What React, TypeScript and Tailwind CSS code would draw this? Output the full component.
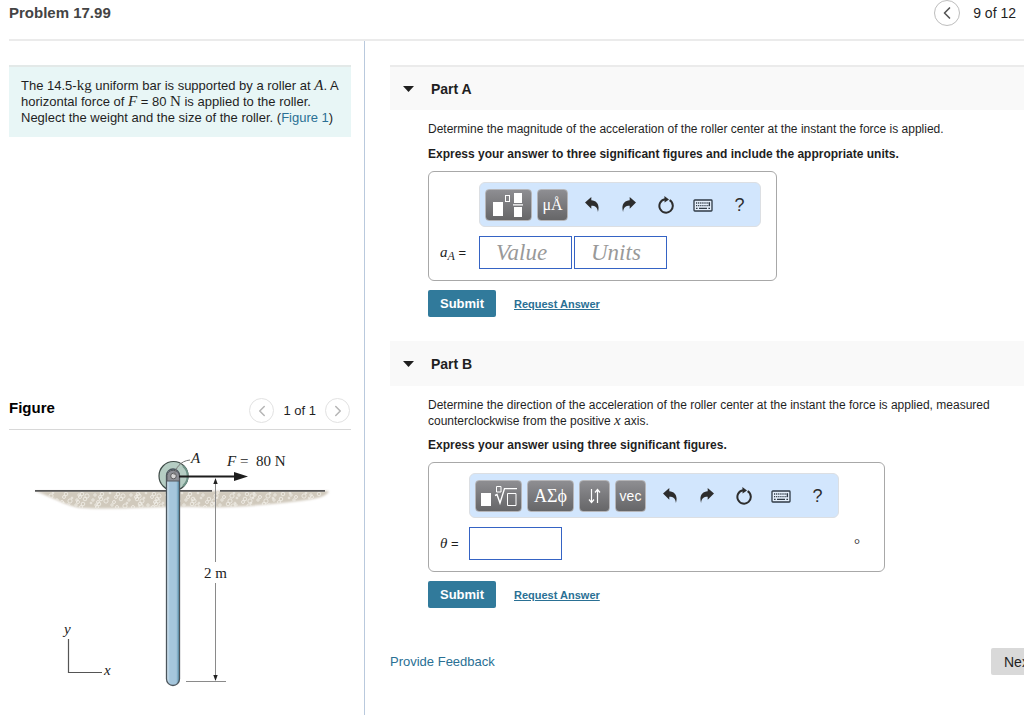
import type { ReactNode } from "react";
import { ChevronLeft, ChevronRight } from "lucide-react";

const serif = "font-['Liberation_Serif',serif]";

function Var({ children }: { children: ReactNode }) {
  return <i className="font-['Liberation_Serif',serif] text-[15px] leading-none">{children}</i>;
}

function UndoIcon({ flip = false }: { flip?: boolean }) {
  return (
    <svg width="14" height="15" viewBox="0 0 40 43" className={flip ? "-scale-x-100" : ""} aria-hidden="true">
      <path fill="#2d2d2d" d="M0 16 L18 0 V9 C34 10 43 22 37 43 C36 30 30 25 18 25 V34 Z" />
    </svg>
  );
}

function ResetIcon() {
  return (
    <svg width="18" height="18" viewBox="0 0 18 18" aria-hidden="true">
      <path d="M12.6 4.2 A6.7 6.7 0 1 1 8 3.3" fill="none" stroke="#2d2d2d" strokeWidth="2" />
      <path d="M7.4 0 L12 3.4 L7.6 6.6 Z" fill="#2d2d2d" />
    </svg>
  );
}

function KeyboardIcon() {
  return (
    <svg width="20" height="14" viewBox="0 0 20 14" aria-hidden="true">
      <rect x="1" y="2" width="18" height="11" rx="0.8" fill="#e4effb" stroke="#2f3a45" strokeWidth="1.3" />
      <path d="M3 5 H17 M3 7.6 H17" stroke="#2f3a45" strokeWidth="1.3" strokeDasharray="1.2 0.9" />
      <path d="M3 10.4 H4.6 M6 10.4 H14 M15.4 10.4 H17 M16.4 4.4 V8" stroke="#2f3a45" strokeWidth="1.3" />
    </svg>
  );
}

function FractionIcon() {
  return (
    <svg width="32" height="26" viewBox="0 0 32 26" aria-hidden="true">
      <path fill="#fff" d="M0 10 H10 V24 H0 Z M21 1 H29 V11 H21 Z M20 12.3 H30 V13.6 H20 Z M21 15 H29 V25 H21 Z" />
      <rect x="12.5" y="3.5" width="4" height="6" fill="none" stroke="#fff" />
    </svg>
  );
}

function RootIcon() {
  return (
    <svg width="36" height="24" viewBox="0 0 36 24" aria-hidden="true">
      <path fill="#fff" d="M0 9 H10 V22 H0 Z" />
      <path fill="none" stroke="#fff" d="M15.5 2.5 H20 V8 H15.5 Z M26.5 9.5 H35 V21.5 H26.5 Z" />
      <path fill="none" stroke="#fff" strokeWidth="1.4" d="M14 11.5 L16 10.5 L19 19 L23.5 4.6 H36" />
    </svg>
  );
}

function SwapIcon() {
  return (
    <svg width="13" height="16" viewBox="0 0 13 16" aria-hidden="true">
      <path fill="none" stroke="#fff" strokeWidth="1.2" d="M3.5 1 V14.5 M1 11.5 L3.5 14.5 L6 11.5 M9.5 15 V1.5 M7 4.5 L9.5 1.5 L12 4.5" />
    </svg>
  );
}

const actions = [
  { label: "Undo", icon: <UndoIcon /> },
  { label: "Redo", icon: <UndoIcon flip /> },
  { label: "Reset", icon: <ResetIcon /> },
  { label: "Keyboard shortcuts", icon: <KeyboardIcon /> },
  { label: "Help", icon: <span className="text-lg">?</span> },
];

function ToolKey({ label, wide = false, children }: { label: string; wide?: boolean; children: ReactNode }) {
  return (
    <button
      type="button"
      aria-label={label}
      className={`flex h-8 items-center justify-center rounded border border-[#b5b5b8] bg-linear-to-b from-[#8e8e92] to-[#666668] text-white ${wide ? "w-[47px]" : "w-[31px]"}`}
    >
      {children}
    </button>
  );
}

function Toolbar({ children }: { children: ReactNode }) {
  return (
    <div role="toolbar" className="flex h-[45px] w-fit items-center rounded-md border border-[#dcdfe3] bg-[#d2e6fd] pr-0.5 pl-[5px]">
      <div className="mr-[5px] flex gap-[5px]">{children}</div>
      {actions.map((action) => (
        <button key={action.label} type="button" aria-label={action.label} className="flex h-8 w-[37px] items-center justify-center text-[#2d2d2d]">
          {action.icon}
        </button>
      ))}
    </div>
  );
}

function Part({ title, first = false, children }: { title: string; first?: boolean; children: ReactNode }) {
  return (
    <section>
      <h2 className={`h-[45px] bg-[#f9f9f9] ${first ? "border-t-2 border-[#ebebeb]" : ""}`}>
        <button type="button" aria-expanded="true" className="flex h-full w-full items-center gap-[17px] pl-[13px] text-sm font-bold text-[#1f1f1f]">
          <svg width="11" height="6" viewBox="0 0 11 6" aria-hidden="true">
            <path d="M0 0 H11 L5.5 6 Z" fill="#1f1f1f" />
          </svg>
          {title}
        </button>
      </h2>
      <div className="pt-[11px] pl-[38px] text-xs leading-4">{children}</div>
    </section>
  );
}

function SubmitRow() {
  return (
    <div className="mt-[9px] flex items-center gap-[18px]">
      <button type="submit" className="h-[27px] w-[68px] rounded-xs bg-[#317a9b] text-[13px] font-bold text-white">
        Submit
      </button>
      <a href="#answer" className="text-[11px] font-bold text-[#2a7094] underline">
        Request Answer
      </a>
    </div>
  );
}

const pebbles = Array.from({ length: 170 }, (_, i) => ({
  x: 28 + ((i * 113 + (i % 7) * 3) % 289),
  y: 63 + ((i * 11 + (i % 5) * 3) % 15),
  r: 0.9 + ((i * 7) % 5) * 0.3,
}));

function BarFigure() {
  return (
    <svg viewBox="0 0 342 270" className="w-full" role="img" aria-label="Uniform bar hanging from roller A with a horizontal force of 80 N">
      <defs>
        <clipPath id="soil">
          <path d="M26 61 H320 C318 67 306 69 290 71 C250 76 215 78 190 77 C150 76 110 80 74 78 C60 77 52 71 26 61 Z" />
        </clipPath>
        <linearGradient id="steel" x1="0" x2="1">
          <stop offset="0" stopColor="#dcebf4" />
          <stop offset="0.25" stopColor="#a5c6dc" />
          <stop offset="0.75" stopColor="#a5c6dc" />
          <stop offset="1" stopColor="#4e89a6" />
        </linearGradient>
        <filter id="soft" x="-5%" y="-20%" width="110%" height="150%">
          <feGaussianBlur stdDeviation="1" />
        </filter>
      </defs>
      <g filter="url(#soft)">
        <path d="M26 61 H320 C318 67 306 69 290 71 C250 76 215 78 190 77 C150 76 110 80 74 78 C60 77 52 71 26 61 Z" fill="#d0c9bc" />
      </g>
      <g clipPath="url(#soil)" fill="none" stroke="#f3f0ea" strokeWidth="0.8">
        {pebbles.map((p, i) => (
          <circle key={i} cx={p.x} cy={p.y} r={p.r} />
        ))}
      </g>
      <path d="M26 60.8 H203 M211 60.8 H316" stroke="#555" strokeWidth="1.8" />
      <circle cx="164.5" cy="46" r="14.5" fill="#b5cdc3" stroke="#3e4a46" strokeWidth="1.2" />
      <path d="M174 36 A13 13 0 0 1 174 56" fill="none" stroke="#6f9488" strokeWidth="2" />
      <rect x="157.5" y="39" width="13" height="216.5" rx="6.5" fill="url(#steel)" stroke="#4b555c" strokeWidth="1.3" />
      <path d="M158 51 V45.5 A6.3 6.3 0 0 1 170.4 45.5 V51 Z" fill="#8d8f95" stroke="#55585c" />
      <circle cx="164.5" cy="46" r="2.8" fill="#d8d8d8" stroke="#5c5c5c" />
      <path d="M165 45 C167 38 171 31 181 30" fill="none" stroke="#777" />
      <path d="M170 46.5 H226" stroke="#1d1d1d" strokeWidth="2" />
      <path d="M225 42 L239 46.5 L225 51 Z" fill="#1d1d1d" />
      <path d="M206.5 50 V132 M206.5 153 V250 M177 251.5 H217" stroke="#8a8a8a" />
      <path d="M206.5 48 L208.7 54 H204.3 Z M206.5 251 L208.7 245 H204.3 Z" fill="#222" />
      <path d="M59.5 209 V242.5 H93" fill="none" stroke="#555" strokeWidth="1.2" />
      <g fontFamily="Liberation Serif, serif" fontSize="15" fill="#222">
        <text x="182" y="33" fontStyle="italic">A</text>
        <text x="218" y="36"><tspan fontStyle="italic">F</tspan> =</text>
        <text x="247" y="36">80 N</text>
        <text x="195" y="148">2 m</text>
        <text x="55" y="204" fontStyle="italic">y</text>
        <text x="95" y="245" fontStyle="italic">x</text>
      </g>
    </svg>
  );
}

export default function App() {
  return (
    <div className="flex min-h-screen flex-col overflow-x-hidden bg-white font-['Liberation_Sans',Arial,sans-serif] text-[13px] leading-4 text-[#1f1f1f]">
      <header className="ml-[9px] flex h-[41px] items-start justify-between border-b-2 border-[#ebebeb] pr-2">
        <h1 className="flex h-[26px] items-center text-[15px] font-bold text-[#444]">Problem 17.99</h1>
        <nav className="flex items-center gap-[13px] text-sm" aria-label="Problems">
          <a href="#previous" aria-label="Previous problem" className="flex size-[26px] items-center justify-center rounded-full border border-[#bdbdbd]">
            <ChevronLeft size={20} strokeWidth={2} color="#555" />
          </a>
          <span>9 of 12</span>
        </nav>
      </header>

      <div className="flex flex-1">
        <aside className="flex w-[365px] shrink-0 flex-col border-r border-[#b9c9dd] pt-6 pr-[13px] pl-[9px]">
          <div className="border-t-2 border-[#e3e9e8] bg-[#e8f6f6] px-3 pt-[11px] pb-[11px]">
            <p>
              The 14.5-<span className={`${serif} text-[15px] leading-none`}>kg</span> uniform bar is supported by a roller at <Var>A</Var>. A
              horizontal force of <Var>F</Var> = 80 <span className={`${serif} text-[15px] leading-none`}>N</span> is applied to the roller.
              Neglect the weight and the size of the roller. (<a href="#figure" className="text-[#2a7094]">Figure 1</a>)
            </p>
          </div>

          <section id="figure" className="pt-[259px]">
            <div className="flex h-[34px] items-start justify-between border-b border-[#d8d8d8]">
              <h2 className="pt-1 text-[15px] font-bold text-black">Figure</h2>
              <div className="flex items-center gap-[9px] pt-0.5 pr-px">
                <button type="button" aria-label="Previous figure" className="flex size-[25px] items-center justify-center rounded-full border border-[#e2e2e2]">
                  <ChevronLeft size={18} color="#b5b5b5" />
                </button>
                <span>1 of 1</span>
                <button type="button" aria-label="Next figure" className="flex size-[25px] items-center justify-center rounded-full border border-[#e2e2e2]">
                  <ChevronRight size={18} color="#b5b5b5" />
                </button>
              </div>
            </div>
            <BarFigure />
          </section>
        </aside>

        <main className="min-w-0 flex-1 pt-6 pl-[25px]">
          <Part title="Part A" first>
            <p>Determine the magnitude of the acceleration of the roller center at the instant the force is applied.</p>
            <p className="mt-[9px] font-bold">Express your answer to three significant figures and include the appropriate units.</p>
            <form>
              <div className="mt-[9px] grid h-[110px] w-[349px] grid-cols-[39px_1fr] content-start items-center gap-y-[9px] rounded-md border border-[#a8a8a8] pt-[10px] pl-[11px] text-[13px]">
                <div className="col-start-2">
                  <Toolbar>
                    <ToolKey label="Templates" wide><FractionIcon /></ToolKey>
                    <ToolKey label="Unit symbols"><span className={`${serif} text-base`}>μÅ</span></ToolKey>
                  </Toolbar>
                </div>
                <label htmlFor="value" className="whitespace-nowrap">
                  <Var>a</Var><sub className={`${serif} text-xs italic`}>A</sub> =
                </label>
                <div className="flex gap-0.5">
                  <input id="value" placeholder="Value" className={`${serif} h-[33px] w-[93px] border border-[#3563c4] pl-4 text-[23px] italic placeholder:text-[#999]`} />
                  <input aria-label="Units" placeholder="Units" className={`${serif} h-[33px] w-[93px] border border-[#3563c4] pl-4 text-[23px] italic placeholder:text-[#999]`} />
                </div>
              </div>
              <SubmitRow />
            </form>
          </Part>

          <div className="mt-6">
            <Part title="Part B">
              <p>
                Determine the direction of the acceleration of the roller center at the instant the force is applied, measured
                counterclockwise from the positive <Var>x</Var> axis.
              </p>
              <p className="mt-2 font-bold">Express your answer using three significant figures.</p>
              <form>
                <div className="mt-[9px] grid h-[110px] w-[457px] grid-cols-[29px_1fr] content-start items-center gap-y-[9px] rounded-md border border-[#a8a8a8] pt-[10px] pl-[11px] text-[13px]">
                  <div className="col-start-2">
                    <Toolbar>
                      <ToolKey label="Templates" wide><RootIcon /></ToolKey>
                      <ToolKey label="Greek letters" wide><span className={`${serif} text-lg`}>ΑΣϕ</span></ToolKey>
                      <ToolKey label="Arrows"><SwapIcon /></ToolKey>
                      <ToolKey label="Vector"><span className="text-sm">vec</span></ToolKey>
                    </Toolbar>
                  </div>
                  <label htmlFor="theta" className="whitespace-nowrap">
                    <Var>θ</Var> =
                  </label>
                  <div className="flex items-center justify-between pr-6">
                    <input id="theta" className="h-[33px] w-[93px] border border-[#3563c4] px-2 text-lg" />
                    <span className={`${serif} text-[15px]`}>°</span>
                  </div>
                </div>
                <SubmitRow />
              </form>
            </Part>
          </div>

          <footer className="-mr-8 mt-10 flex items-center justify-between pb-10">
            <a href="#feedback" className="text-[13px] text-[#2a7094]">Provide Feedback</a>
            <button type="button" className="flex h-[27px] w-[65px] items-center rounded-xs bg-[#d9d9d9] pl-[13px] text-sm whitespace-nowrap">
              Next ›
            </button>
          </footer>
        </main>
      </div>
    </div>
  );
}
